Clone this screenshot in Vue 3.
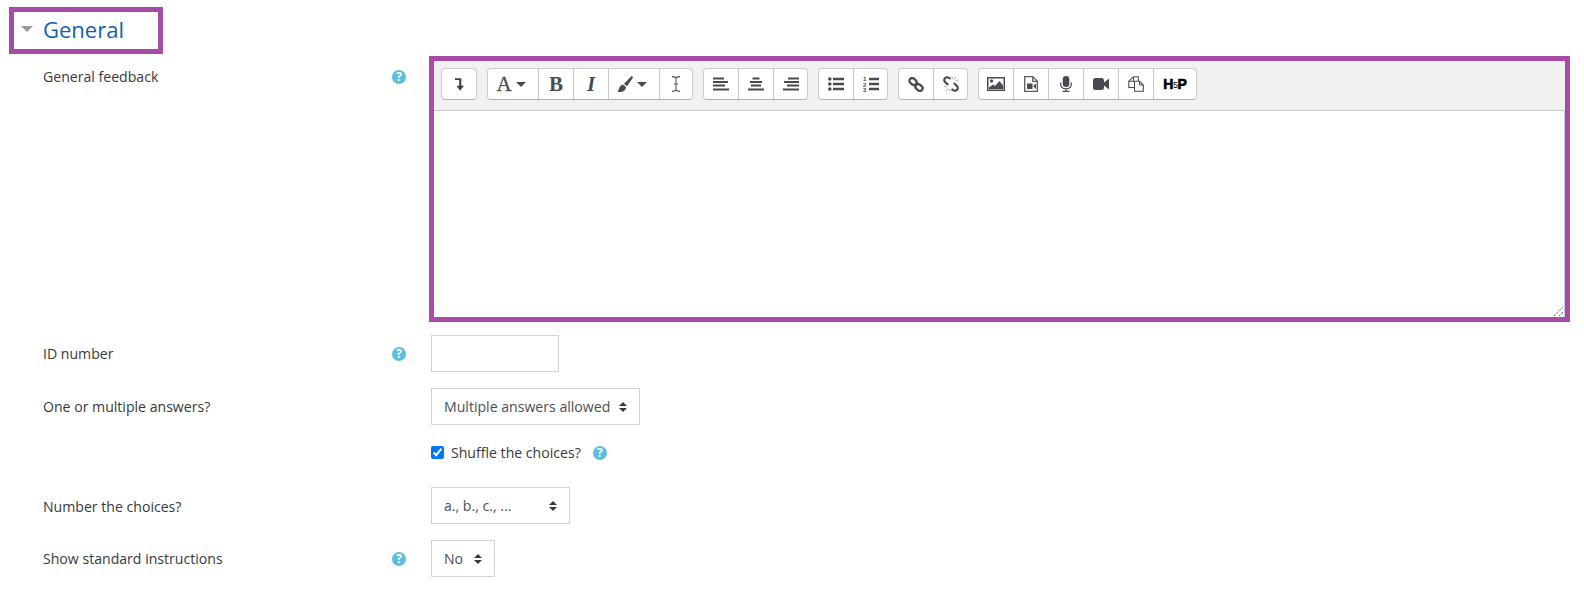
<script setup>
const groups = [
  [{ w: 34, icon: 'collapse' }],
  [
    { w: 50, text: 'A', cls: 'serif-a', caret: true },
    { w: 35, text: 'B', cls: 'serif-b' },
    { w: 35, text: 'I', cls: 'serif-i' },
    { w: 51, icon: 'brush', caret: true },
    { w: 33, icon: 'ibeam' }
  ],
  [
    { w: 34, icon: 'alignl' },
    { w: 35, icon: 'alignc' },
    { w: 34, icon: 'alignr' }
  ],
  [
    { w: 34, icon: 'ul' },
    { w: 34, icon: 'ol' }
  ],
  [
    { w: 34, icon: 'link' },
    { w: 34, icon: 'unlink' }
  ],
  [
    { w: 34, icon: 'image' },
    { w: 35, icon: 'file' },
    { w: 35, icon: 'mic' },
    { w: 35, icon: 'video' },
    { w: 35, icon: 'copy' },
    { w: 43, icon: 'h5p' }
  ]
]
</script>

<template>
  <div class="page">
    <div class="legend">
      <span class="tri"></span>
      <span class="legend-text">General</span>
    </div>

    <div class="row row-editor">
      <div class="label">General feedback</div>
      <div class="help-cell"><span class="help">?</span></div>
      <div class="editor">
        <div class="toolbar">
          <div v-for="(g, gi) in groups" :key="gi" class="group">
            <div v-for="(b, bi) in g" :key="bi" class="btn" :class="{ 'has-caret': b.caret }" :style="{ width: b.w + 'px' }">
              <span v-if="b.text" :class="b.cls">{{ b.text }}</span>
              <svg v-if="b.icon === 'collapse'" width="9" height="13" viewBox="0 0 10 14"><path d="M0 0h7v8.500h3L5.600 14 1.800 8.500h2.900V2H0z" fill="#3c3f44"/></svg>
              <svg v-if="b.icon === 'brush'" width="16" height="16" viewBox="0 0 16 16"><path d="M14 .4c1-.6 2.300.4 1.700 1.500L10 10.200 7 7.700zM6 8.500 9 11c0 3-3 5-6 5-1.500 0-2.500-.5-3-1 1.500 0 1.800-1.500 2.200-3C2.800 10 4.500 9 6 8.500z" fill="#484c52"/></svg>
              <svg v-if="b.icon === 'ibeam'" width="10" height="16" viewBox="0 0 10 16"><path d="M1 .6c2 0 3.300.4 4 1.200.7-.8 2-1.200 4-1.200M1 15.400c2 0 3.300-.4 4-1.200.7.800 2 1.200 4 1.200M3 8h4" fill="none" stroke="#484c52" stroke-width="1.100"/><path d="M5 2v12" stroke="#7c4a86" stroke-width="1.100"/></svg>
              <svg v-if="b.icon === 'alignl'" width="16" height="14" viewBox="0 0 16 14"><path d="M0 .5h11v2H0zM0 4h15v2H0zM0 7.500h12v2H0zM0 11.500h16v2H0z" fill="#484c52"/></svg>
              <svg v-if="b.icon === 'alignc'" width="16" height="14" viewBox="0 0 16 14"><path d="M4.500 .5h7v2h-7zM2 4h12v2H2zM3 7.500h10v2H3zM0 11.500h16v2H0z" fill="#484c52"/></svg>
              <svg v-if="b.icon === 'alignr'" width="16" height="14" viewBox="0 0 16 14"><path d="M5 .5h11v2H5zM1 4h15v2H1zM4 7.500h12v2H4zM0 11.500h16v2H0z" fill="#484c52"/></svg>
              <svg v-if="b.icon === 'ul'" width="16" height="14" viewBox="0 0 16 14"><path d="M5 .8h11v2.400H5zM5 5.800h11v2.400H5zM5 10.800h11v2.400H5z" fill="#484c52"/><circle cx="1.800" cy="2" r="1.800" fill="#484c52"/><circle cx="1.800" cy="7" r="1.800" fill="#484c52"/><circle cx="1.800" cy="12" r="1.800" fill="#484c52"/></svg>
              <svg v-if="b.icon === 'ol'" width="16" height="16" viewBox="0 0 16 16"><path d="M6 1.800h10v2.400H6zM6 6.800h10v2.400H6zM6 11.800h10v2.400H6z" fill="#484c52"/><text x="0" y="5" class="num">1</text><text x="0" y="10.500" class="num">2</text><text x="0" y="16" class="num">3</text></svg>
              <svg v-if="b.icon === 'link'" width="16" height="15" viewBox="0 0 16 15"><g fill="none" stroke="#484c52" stroke-width="2.300"><rect x="1.200" y="1.800" width="7.600" height="5.400" rx="2.700" transform="rotate(40 5 4.500)"/><rect x="7.200" y="7.800" width="7.600" height="5.400" rx="2.700" transform="rotate(40 11 10.500)"/></g></svg>
              <svg v-if="b.icon === 'unlink'" width="16" height="16" viewBox="0 0 16 16"><g fill="none" stroke="#484c52" stroke-width="2.100"><path d="M7.500 3 6 1.900C4.500.9 2.500 1.200 1.700 2.600c-.8 1.300-.5 2.500.4 3.400L5.200 9"/><path d="M8.500 13l1.500 1.100c1.500 1 3.500.7 4.300-.7.800-1.300.5-2.500-.4-3.400L10.800 7"/></g><path d="M9 .5l.5 2.500M13 1l-1.500 2.500M15.500 4l-3 1M1 11l2.500-1M3 15l2-2.500M7 15.500 6.500 13" stroke="#a39aa8" stroke-width=".9"/></svg>
              <svg v-if="b.icon === 'image'" width="18" height="14" viewBox="0 0 18 14"><rect x=".75" y=".75" width="16.500" height="12.500" fill="#fff" stroke="#484c52" stroke-width="1.500"/><circle cx="4.500" cy="4" r="1.700" fill="#484c52"/><path d="M2 12v-1.500l4-3 2 1.500 4.500-5L16 8.500V12z" fill="#484c52"/></svg>
              <svg v-if="b.icon === 'file'" width="14" height="16" viewBox="0 0 14 16"><path d="M.7.7h8l4.600 4.600v10H.7z" fill="#fff" stroke="#5a5e66" stroke-width="1.300"/><path d="M8.700.7v4.600h4.600" fill="none" stroke="#5a5e66" stroke-width="1.200"/><rect x="3" y="7.500" width="5.500" height="5.500" fill="#484c52"/><path d="M9 10.200l3-2.700v5.500z" fill="#484c52"/></svg>
              <svg v-if="b.icon === 'mic'" width="12" height="16" viewBox="0 0 12 16"><rect x="2.700" y="0" width="6.600" height="11" rx="3.300" fill="#484c52"/><path d="M.7 6.500v1.500c0 3 2.200 4.800 5.300 4.800s5.300-1.800 5.300-4.800V6.500M6 12.800v2.200M2.500 15.300h7" fill="none" stroke="#484c52" stroke-width="1.200"/></svg>
              <svg v-if="b.icon === 'video'" width="16" height="12" viewBox="0 0 16 12"><rect width="11" height="12" rx="2.500" fill="#484c52"/><path d="M11 4.500 16 .5v11L11 7.500z" fill="#484c52"/></svg>
              <svg v-if="b.icon === 'copy'" width="16" height="16" viewBox="0 0 16 16"><path d="M5.500.7h4.800v4.500M5.500.7.800 5.200V11.500H6M5.500.7v4.500H.8" fill="none" stroke="#484c52" stroke-width="1.100"/><path d="M6.500 5.200h5L15.300 9v6.300H6.500z" fill="#fff" stroke="#484c52" stroke-width="1.100"/><path d="M11.500 5.200V9h3.800" fill="none" stroke="#484c52"/></svg>
              <span v-if="b.icon === 'h5p'" class="h5p">H<i>5</i>P</span>
              <span v-if="b.caret" class="caret"></span>
            </div>
          </div>
        </div>
        <div class="edit-area">
          <svg class="grip" width="11" height="11" viewBox="0 0 11 11"><path d="M1 10 10 1M6 10l4-4" stroke="#666" stroke-width="1" stroke-dasharray="1.400 .8" fill="none"/></svg>
        </div>
      </div>
    </div>

    <div class="row row-id">
      <div class="label">ID number</div>
      <div class="help-cell"><span class="help">?</span></div>
      <div><input class="text-input" type="text" /></div>
    </div>

    <div class="row row-field">
      <div class="label">One or multiple answers?</div>
      <div class="help-cell"></div>
      <div class="select sel-multi"><span>Multiple answers allowed</span><span class="updown"></span></div>
    </div>

    <div class="row row-check">
      <div class="label"></div>
      <div class="help-cell"></div>
      <label class="check"><input type="checkbox" checked /><span>Shuffle the choices?</span><span class="help">?</span></label>
    </div>

    <div class="row row-field row-num">
      <div class="label">Number the choices?</div>
      <div class="help-cell"></div>
      <div class="select sel-num"><span>a., b., c., ...</span><span class="updown"></span></div>
    </div>

    <div class="row row-field">
      <div class="label">Show standard instructions</div>
      <div class="help-cell"><span class="help">?</span></div>
      <div class="select sel-no"><span>No</span><span class="updown"></span></div>
    </div>
  </div>
</template>

<style>
html, body { background: #fff; overflow: hidden; }
</style>

<style scoped>
.page {
  width: 1584px;
  height: 589px;
  box-sizing: border-box;
  padding-top: 7px;
  font-family: "Open Sans", "Noto Sans", sans-serif;
  font-size: 14.1px;
  color: #373a3c;
  overflow: hidden;
}
.legend {
  box-sizing: border-box;
  width: 154px;
  height: 47px;
  margin-left: 9px;
  border: 5px solid #a64ca6;
  display: flex;
  align-items: center;
  padding: 0 0 4px 7px;
}
.tri {
  width: 0;
  height: 0;
  border-left: 6px solid transparent;
  border-right: 6px solid transparent;
  border-top: 6px solid #999;
  margin-right: 10px;
}
.legend-text {
  font-size: 22px;
  line-height: 30px;
  color: #0f62b0;
}
.row {
  display: grid;
  grid-template-columns: 347px 41px 1fr;
  padding-left: 43px;
  align-items: start;
}
.row-editor { margin-top: 2px; }
.row-id { margin-top: 13px; }
.row-field { margin-top: 16px; }
.row-check { margin-top: 18px; height: 28px; }
.label { padding-top: 9px; line-height: 20px; }
.row-editor .label { padding-top: 11px; }
.row-num .label { padding-top: 10px; }
.help-cell { display: flex; padding-top: 12px; padding-left: 2px; }
.row-editor .help-cell { padding-top: 14px; }
.help {
  display: block;
  width: 14px;
  height: 14px;
  border-radius: 50%;
  background: #5bbde0;
  color: #fff;
  font: bold 12px/14px "Open Sans", sans-serif;
  text-align: center;
}
.editor {
  box-sizing: border-box;
  margin-left: -2px;
  width: 1141px;
  height: 266px;
  border: 5px solid #a64ca6;
  display: flex;
  flex-direction: column;
}
.toolbar {
  box-sizing: border-box;
  height: 50px;
  background: #f1f1f1;
  border-bottom: 1px solid #ccc;
  padding: 7px 0 0 7px;
  display: flex;
  gap: 10px;
  align-items: flex-start;
}
.group {
  display: flex;
  height: 32px;
  box-sizing: border-box;
  background: #fff;
  border: 1px solid #ccc;
  border-bottom-color: #b5b5b5;
  border-radius: 4px;
}
.btn {
  box-sizing: border-box;
  display: flex;
  align-items: center;
  justify-content: center;
  border-left: 1px solid #c8c8c8;
  color: #484c52;
}
.btn:first-child { border-left: 0; }
.has-caret { padding-right: 4px; }
.serif-a, .serif-b, .serif-i { font-family: "Liberation Serif", serif; color: #484c52; font-size: 21px; line-height: 1; }
.serif-a { -webkit-text-stroke: .3px #484c52; }
.serif-b { font-weight: bold; }
.serif-i { font-style: italic; font-weight: bold; }
.caret {
  width: 0;
  height: 0;
  margin-left: 4px;
  border-left: 5px solid transparent;
  border-right: 5px solid transparent;
  border-top: 5px solid #484c52;
}
.num {
  font: bold 6px "Liberation Sans", sans-serif;
  fill: #484c52;
}
.h5p {
  font: bold 14px/1 "Liberation Sans", sans-serif;
  color: #000;
  -webkit-text-stroke: .6px #000;
  white-space: nowrap;
}
.h5p i {
  font: normal 9px/1 "Liberation Sans", sans-serif;
  -webkit-text-stroke: 0;
  margin: 0 -.5px;
  vertical-align: 1px;
}
.edit-area {
  flex: 1;
  background: #fff;
  border-right: 1px solid #c5ccd6;
  position: relative;
}
.grip {
  position: absolute;
  right: 0;
  bottom: 0;
}
.text-input {
  display: block;
  box-sizing: border-box;
  width: 128px;
  height: 37px;
  border: 1px solid #ced4da;
  background: #fff;
  outline: 0;
}
.select {
  box-sizing: border-box;
  height: 37px;
  border: 1px solid #ced4da;
  display: flex;
  align-items: center;
  justify-content: space-between;
  padding: 0 12px;
  color: #495057;
}
.sel-multi { width: 209px; }
.sel-num { width: 139px; }
.sel-no { width: 64px; }
.updown {
  position: relative;
  width: 8px;
  height: 10px;
  flex: none;
}
.updown::before, .updown::after {
  content: "";
  position: absolute;
  left: 0;
  width: 0;
  height: 0;
  border-left: 4px solid transparent;
  border-right: 4px solid transparent;
}
.updown::before { top: 0; border-bottom: 4px solid #343a40; }
.updown::after { bottom: 0; border-top: 4px solid #343a40; }
.check {
  display: flex;
  align-items: center;
  gap: 7px;
}
.check input { margin: 0; width: 13px; height: 13px; }
.check .help { margin-left: 5px; }
</style>
